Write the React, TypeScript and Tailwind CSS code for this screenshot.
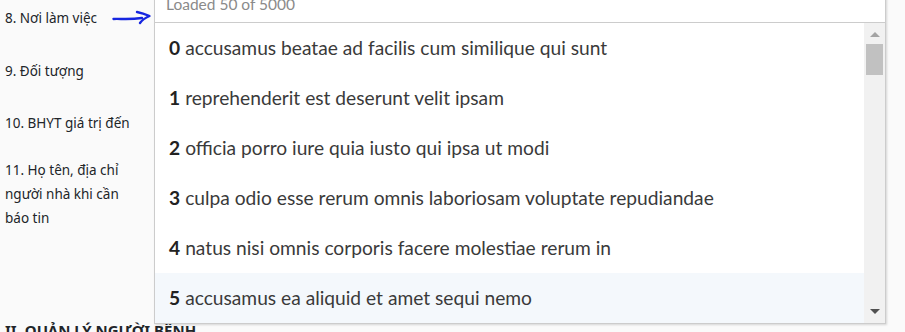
import React from "react";

const items = [
  "accusamus beatae ad facilis cum similique qui sunt",
  "reprehenderit est deserunt velit ipsam",
  "officia porro iure quia iusto qui ipsa ut modi",
  "culpa odio esse rerum omnis laboriosam voluptate repudiandae",
  "natus nisi omnis corporis facere molestiae rerum in",
  "accusamus ea aliquid et amet sequi nemo",
];

function HandArrow() {
  return (
    <svg width="40" height="16" viewBox="0 0 40 16" className="absolute left-[112px] top-[9px]">
      <path
        d="M1.5 10 C 8 9.5, 16 11, 30 9"
        fill="none"
        stroke="#1626e0"
        strokeWidth="2.4"
        strokeLinecap="round"
      />
      <path
        d="M25 3 C 30 4, 34 5.5, 37.5 7 C 33 9, 30 11, 28 14"
        fill="none"
        stroke="#1626e0"
        strokeWidth="2.4"
        strokeLinecap="round"
        strokeLinejoin="round"
      />
    </svg>
  );
}

function Scrollbar() {
  return (
    <div className="flex w-[21px] flex-col items-center bg-[#f1f1f1]">
      <div className="mt-[9px] h-0 w-0 border-x-[5px] border-b-[5px] border-x-transparent border-b-[#a3a3a3]" />
      <div className="mt-[7px] h-[31px] w-[17px] bg-[#c1c1c1]" />
      <div className="flex-1" />
      <div className="mb-[9px] h-0 w-0 border-x-[5px] border-t-[5px] border-x-transparent border-t-[#505050]" />
    </div>
  );
}

export default function App() {
  return (
    <div className="relative h-[332px] w-[905px] overflow-hidden bg-[#fafafa] text-[#212529]">
      <div
        className="flex w-[150px] flex-col pl-[5px] text-[13.5px] leading-[24px]"
        style={{ fontFamily: "'Noto Sans', 'Open Sans', sans-serif" }}
      >
        <div className="mt-[6px]">8. Nơi làm việc</div>
        <div className="mt-[29px]">9. Đối tượng</div>
        <div className="mt-[28px]">10. BHYT giá trị đến</div>
        <div className="mt-[23px] w-[140px]">11. Họ tên, địa chỉ người nhà khi cần báo tin</div>
        <div className="mt-[88px] whitespace-nowrap text-[15px] font-bold">II. QUẢN LÝ NGƯỜI BỆNH</div>
      </div>

      <HandArrow />

      <div
        className="absolute left-[154px] top-[-14px] flex h-[338px] w-[732px] flex-col border border-[#cccccc] bg-white shadow-[1px_1px_2px_rgba(0,0,0,0.15)]"
        style={{ fontFamily: "Lato, 'Noto Sans', sans-serif" }}
      >
        <div className="flex h-[36px] items-center border-b border-[#cccccc] px-[11px] text-[15.5px] text-[#8a8a8a]">
          Loaded 50 of 5000
        </div>
        <div className="flex flex-1">
          <div className="flex flex-1 flex-col">
            {items.map((text, i) => (
              <div
                key={i}
                className={`flex h-[50px] items-center px-[14px] text-[19.2px] text-[#3a3a3a] ${
                  i === 5 ? "bg-[#f4f8fc]" : ""
                }`}
              >
                <span className="mr-[5px] font-bold text-[#222]">{i}</span>
                {text}
              </div>
            ))}
          </div>
          <Scrollbar />
        </div>
      </div>
    </div>
  );
}
